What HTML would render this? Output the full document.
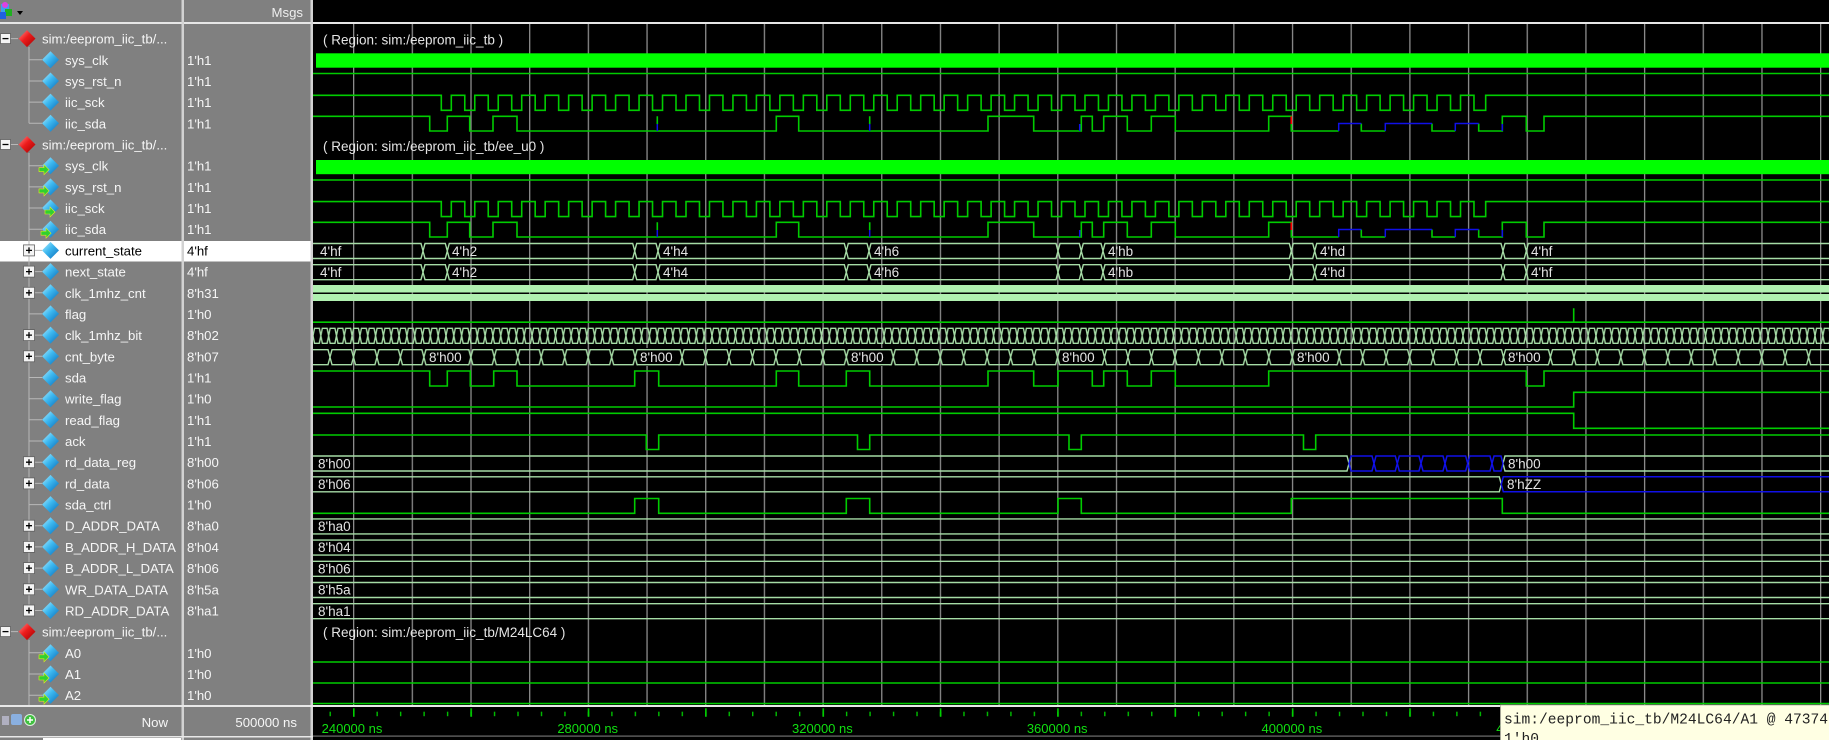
<!DOCTYPE html>
<html><head><meta charset="utf-8"><style>
html,body{margin:0;padding:0;background:#808080;overflow:hidden}
svg{display:block}
.n{font-family:"Liberation Sans",sans-serif;font-size:13.2px;fill:#f6f6f6}
.w{font-family:"Liberation Sans",sans-serif;font-size:13.5px;fill:#e4e4e4}
.t{font-family:"Liberation Sans",sans-serif;font-size:13px;fill:#10e010}
.g{fill:none;stroke:#00cc00;stroke-width:1.6}
.p{fill:none;stroke:#a6dca6;stroke-width:1.4}
.b{fill:none;stroke:#1010e8;stroke-width:1.5}
</style></head><body>
<svg width="1829" height="740" viewBox="0 0 1829 740" xmlns="http://www.w3.org/2000/svg">
<defs>
<linearGradient id="gb" x1="0" y1="0" x2="1" y2="1"><stop offset="0" stop-color="#b8f0ff"/><stop offset="0.45" stop-color="#3cb8f0"/><stop offset="1" stop-color="#0a6cb8"/></linearGradient>
<linearGradient id="gr" x1="0" y1="0" x2="1" y2="1"><stop offset="0" stop-color="#ff9090"/><stop offset="0.45" stop-color="#ee1c1c"/><stop offset="1" stop-color="#a00000"/></linearGradient>
<g id="dia"><polygon points="0,-8.5 8.5,0 0,8.5 -8.5,0" fill="url(#gb)"/></g>
<g id="rdia"><polygon points="0,-8.5 8.5,0 0,8.5 -8.5,0" fill="url(#gr)"/></g>
<g id="arr"><polygon points="-7,2 -2,2 -2,-1 3,4 -2,9 -2,6 -7,6" fill="#30d030" stroke="#e8e820" stroke-width="0.6"/></g>
<g id="plus"><rect x="-5.5" y="-5.5" width="11" height="11" fill="#f4f4f4" stroke="#606060" stroke-width="0.8"/><path d="M-3,0H3M0,-3V3" stroke="#000" stroke-width="1.3"/></g>
<g id="minus"><rect x="-5" y="-5" width="10" height="10" fill="#f4f4f4" stroke="#606060" stroke-width="0.8"/><path d="M-3,0H3" stroke="#000" stroke-width="1.3"/></g>
<pattern id="grid" x="353" y="0" width="58.68" height="740" patternUnits="userSpaceOnUse"><rect x="0" y="0" width="1.3" height="740" fill="#8c8c8c"/></pattern>
<pattern id="cb" x="330" y="0" width="23.47" height="740" patternUnits="userSpaceOnUse"><path d="M2,349.7H21.47L23.47,357.2L21.47,364.7H2L0,357.2Z" class="p"/></pattern>
<pattern id="bit" x="313" y="0" width="7.823" height="740" patternUnits="userSpaceOnUse"><path d="M1.5,328.3H6.32L7.82,335.8L6.32,343.3H1.5L0,335.8Z" class="p"/></pattern>
<pattern id="tmin" x="329.53" y="0" width="23.472" height="740" patternUnits="userSpaceOnUse"><rect x="0" y="711.7" width="1.4" height="4.5" fill="#00c000"/></pattern>
<pattern id="tmaj" x="353" y="0" width="117.36" height="740" patternUnits="userSpaceOnUse"><rect x="0" y="708.3" width="1.6" height="8.5" fill="#00d000"/></pattern>
<clipPath id="wc"><rect x="313" y="24" width="1516" height="682"/></clipPath>
<clipPath id="nc"><rect x="0" y="24" width="181.5" height="682"/></clipPath>
</defs>

<rect x="0" y="0" width="1829" height="740" fill="#808080"/>
<rect x="313" y="0" width="1516" height="740" fill="#000"/>
<rect x="0" y="22" width="1829" height="2" fill="#e6e6e6"/>
<rect x="181.5" y="0" width="2.5" height="740" fill="#d2d2d2"/>
<rect x="310.5" y="0" width="2.5" height="740" fill="#d2d2d2"/>
<rect x="1" y="4" width="8" height="8" fill="#3aa0f0"/><rect x="5" y="9" width="7" height="7" fill="#20b020"/><circle cx="5" cy="5" r="3" fill="#e040e0"/><rect x="0" y="12" width="6" height="7" fill="#2060e0"/>
<path d="M17,11H23L20,15Z" fill="#000"/>
<text x="303" y="17" class="n" text-anchor="end" style="fill:#eee">Msgs</text>

<rect x="0" y="241" width="181.5" height="20.5" fill="#fff"/>
<rect x="184" y="241" width="126.5" height="20.5" fill="#fff"/>

<g stroke="#b8b8b8" stroke-width="1" fill="none">
<path d="M29,47V123.3M29,59.8H42M29,81H42M29,102.1H42M29,123.3H42"/>
<path d="M29,153V610.5M29,165.7H42M29,186.9H42M29,208H42M29,229.2H42M34,250.4H42M34,271.6H42M34,292.8H42M29,313.9H42M34,335.1H42M34,356.3H42M29,377.5H42M29,398.7H42M29,419.8H42M29,441H42M34,462.2H42M34,483.4H42M29,504.6H42M34,525.7H42M34,546.9H42M34,568.1H42M34,589.3H42M34,610.5H42"/>
<path d="M29,640V706M29,652.8H42M29,674H42M29,695.2H42"/>
<path d="M10,38.6H18M10,144.5H18M10,631.6H18"/>
</g>
<use href="#minus" x="5.5" y="38.6"/><use href="#rdia" x="27" y="38.6"/>
<use href="#minus" x="5.5" y="144.5"/><use href="#rdia" x="27" y="144.5"/>
<use href="#minus" x="5.5" y="631.6"/><use href="#rdia" x="27" y="631.6"/>
<g class="n" clip-path="url(#nc)">
<text x="42" y="43.6">sim:/eeprom_iic_tb/...</text>
<text x="42" y="149.5">sim:/eeprom_iic_tb/...</text>
<text x="42" y="636.6">sim:/eeprom_iic_tb/...</text>
</g>
<g>
<use href="#dia" x="50.5" y="59.8"/><use href="#dia" x="50.5" y="81"/><use href="#dia" x="50.5" y="102.1"/><use href="#dia" x="50.5" y="123.3"/>
<use href="#dia" x="50.5" y="165.7"/><use href="#dia" x="50.5" y="186.9"/><use href="#dia" x="50.5" y="208"/><use href="#dia" x="50.5" y="229.2"/>
<use href="#dia" x="50.5" y="250.4"/><use href="#dia" x="50.5" y="271.6"/><use href="#dia" x="50.5" y="292.8"/><use href="#dia" x="50.5" y="313.9"/>
<use href="#dia" x="50.5" y="335.1"/><use href="#dia" x="50.5" y="356.3"/><use href="#dia" x="50.5" y="377.5"/><use href="#dia" x="50.5" y="398.7"/>
<use href="#dia" x="50.5" y="419.8"/><use href="#dia" x="50.5" y="441"/><use href="#dia" x="50.5" y="462.2"/><use href="#dia" x="50.5" y="483.4"/>
<use href="#dia" x="50.5" y="504.6"/><use href="#dia" x="50.5" y="525.7"/><use href="#dia" x="50.5" y="546.9"/><use href="#dia" x="50.5" y="568.1"/>
<use href="#dia" x="50.5" y="589.3"/><use href="#dia" x="50.5" y="610.5"/>
<use href="#dia" x="50.5" y="652.8"/><use href="#dia" x="50.5" y="674"/><use href="#dia" x="50.5" y="695.2"/>
<use href="#arr" x="46" y="165.7"/><use href="#arr" x="46" y="186.9"/><use href="#arr" x="52" y="208"/><use href="#arr" x="48" y="229.2"/>
<use href="#arr" x="46" y="652.8"/><use href="#arr" x="46" y="674"/><use href="#arr" x="46" y="695.2"/>
</g>
<g>
<use href="#plus" x="29" y="250.4"/><use href="#plus" x="29" y="271.6"/><use href="#plus" x="29" y="292.8"/>
<use href="#plus" x="29" y="335.1"/><use href="#plus" x="29" y="356.3"/>
<use href="#plus" x="29" y="462.2"/><use href="#plus" x="29" y="483.4"/>
<use href="#plus" x="29" y="525.7"/><use href="#plus" x="29" y="546.9"/><use href="#plus" x="29" y="568.1"/><use href="#plus" x="29" y="589.3"/><use href="#plus" x="29" y="610.5"/>
</g>
<g class="n" clip-path="url(#nc)">
<text x="65" y="64.8">sys_clk</text><text x="65" y="86">sys_rst_n</text><text x="65" y="107.1">iic_sck</text><text x="65" y="128.3">iic_sda</text>
<text x="65" y="170.7">sys_clk</text><text x="65" y="191.9">sys_rst_n</text><text x="65" y="213">iic_sck</text><text x="65" y="234.2">iic_sda</text>
<text x="65" y="255.4" style="fill:#000">current_state</text><text x="65" y="276.6">next_state</text><text x="65" y="297.8">clk_1mhz_cnt</text><text x="65" y="318.9">flag</text>
<text x="65" y="340.1">clk_1mhz_bit</text><text x="65" y="361.3">cnt_byte</text><text x="65" y="382.5">sda</text><text x="65" y="403.7">write_flag</text>
<text x="65" y="424.8">read_flag</text><text x="65" y="446">ack</text><text x="65" y="467.2">rd_data_reg</text><text x="65" y="488.4">rd_data</text>
<text x="65" y="509.6">sda_ctrl</text><text x="65" y="530.7">D_ADDR_DATA</text><text x="65" y="551.9">B_ADDR_H_DATA</text><text x="65" y="573.1">B_ADDR_L_DATA</text>
<text x="65" y="594.3">WR_DATA_DATA</text><text x="65" y="615.5">RD_ADDR_DATA</text>
<text x="65" y="657.8">A0</text><text x="65" y="679">A1</text><text x="65" y="700.2">A2</text>
</g>
<g class="n">
<text x="187" y="64.8">1'h1</text><text x="187" y="86">1'h1</text><text x="187" y="107.1">1'h1</text><text x="187" y="128.3">1'h1</text>
<text x="187" y="170.7">1'h1</text><text x="187" y="191.9">1'h1</text><text x="187" y="213">1'h1</text><text x="187" y="234.2">1'h1</text>
<text x="187" y="255.4" style="fill:#000">4'hf</text><text x="187" y="276.6">4'hf</text><text x="187" y="297.8">8'h31</text><text x="187" y="318.9">1'h0</text>
<text x="187" y="340.1">8'h02</text><text x="187" y="361.3">8'h07</text><text x="187" y="382.5">1'h1</text><text x="187" y="403.7">1'h0</text>
<text x="187" y="424.8">1'h1</text><text x="187" y="446">1'h1</text><text x="187" y="467.2">8'h00</text><text x="187" y="488.4">8'h06</text>
<text x="187" y="509.6">1'h0</text><text x="187" y="530.7">8'ha0</text><text x="187" y="551.9">8'h04</text><text x="187" y="573.1">8'h06</text>
<text x="187" y="594.3">8'h5a</text><text x="187" y="615.5">8'ha1</text>
<text x="187" y="657.8">1'h0</text><text x="187" y="679">1'h0</text><text x="187" y="700.2">1'h0</text>
</g>

<g clip-path="url(#wc)">
<rect x="313" y="24" width="1516" height="682" fill="url(#grid)"/>
<g class="w">
<text x="323" y="44.5">( Region: sim:/eeprom_iic_tb )</text>
<text x="323" y="151">( Region: sim:/eeprom_iic_tb/ee_u0 )</text>
<text x="323" y="637">( Region: sim:/eeprom_iic_tb/M24LC64 )</text>
</g>
<rect x="316" y="53.3" width="1513" height="14.4" fill="#00ff00"/>
<rect x="316" y="160" width="1513" height="14.2" fill="#00ff00"/>
<path class="g" d="M313,73.5H1829M313,180H1829"/>
<g id="sck"><path class="g" d="M313,95.3H441.3v15h10v-15h13.47v15h10v-15h13.47v15h10v-15h13.47v15h10v-15h13.47v15h10v-15h13.47v15h10v-15h13.47v15h10v-15h13.47v15h10v-15h13.47v15h10v-15h13.47v15h10v-15h13.47v15h10v-15h13.47v15h10v-15h13.47v15h10v-15h13.47v15h10v-15h13.47v15h10v-15h13.47v15h10v-15h13.47v15h10v-15h13.47v15h10v-15h13.47v15h10v-15h13.47v15h10v-15h13.47v15h10v-15h13.47v15h10v-15h13.47v15h10v-15h13.47v15h10v-15h13.47v15h10v-15h13.47v15h10v-15h13.47v15h10v-15h13.47v15h10v-15h13.47v15h10v-15h13.47v15h10v-15h13.47v15h10v-15h13.47v15h10v-15h13.47v15h10v-15h13.47v15h10v-15h13.47v15h10v-15h13.47v15h10v-15h13.47v15h10v-15h13.47v15h10v-15h13.47v15h10v-15h13.47v15h10v-15h13.47v15h10v-15h13.47v15h10v-15h13.47v15h10v-15h13.47v15h10v-15h13.47v15h11.7v-15H1829"/></g>
<use href="#sck" y="106.3"/>
<g id="isda">
<path class="g" d="M313,116.3H429.7V131H447.3V116.3H469.7V131H493V116.3H517V131H776.3V116.3H798.7V131H988V116.3H1033.7V131H1081.3V116.3H1092.3V131H1103.7V116.3H1127.3V131H1151.3V116.3H1175.3V131H1268.7V116.3H1291.3V131H1338.7M1361.3,123.5V131H1385.3M1432,123.5V131H1455.3M1478.7,123.5V131H1502.3V116.3H1526.3V131H1544V116.3H1829M657.3,116.3V124M869.7,116.3V124"/>
<path class="b" d="M657.3,124V131M869.7,124V131M1079.7,124V131M1338.7,131V123.5H1361.3M1385.3,131V123.5H1432M1455.3,131V123.5H1478.7M1502.3,131V124"/>
<path d="M1291.3,116.3V124" stroke="#ff0000" stroke-width="1.6"/>
</g>
<use href="#isda" y="106"/>
<g id="cs"><path class="p" d="M300,243.5H421L423,251L421,258.5H300ZM425,243.5H445.3L447.3,251L445.3,258.5H425L423,251ZM449.3,243.5H632.7L634.7,251L632.7,258.5H449.3L447.3,251ZM636.7,243.5H656L658,251L656,258.5H636.7L634.7,251ZM660,243.5H844.3L846.3,251L844.3,258.5H660L658,251ZM848.3,243.5H867L869,251L867,258.5H848.3L846.3,251ZM871,243.5H1056L1058,251L1056,258.5H871L869,251ZM1060,243.5H1079.3L1081.3,251L1079.3,258.5H1060L1058,251ZM1083.3,243.5H1101L1103,251L1101,258.5H1083.3L1081.3,251ZM1105,243.5H1289.3L1291.3,251L1289.3,258.5H1105L1103,251ZM1293.3,243.5H1312.7L1314.7,251L1312.7,258.5H1293.3L1291.3,251ZM1316.7,243.5H1501L1503,251L1501,258.5H1316.7L1314.7,251ZM1505,243.5H1524.3L1526.3,251L1524.3,258.5H1505L1503,251ZM1528.3,243.5H1840V258.5H1528.3L1526.3,251Z"/>
<g class="w"><text x="320" y="256">4'hf</text><text x="452" y="256">4'h2</text><text x="663" y="256">4'h4</text><text x="874" y="256">4'h6</text><text x="1108" y="256">4'hb</text><text x="1320" y="256">4'hd</text><text x="1531" y="256">4'hf</text></g></g>
<use href="#cs" y="21.18"/>
<rect x="313" y="285" width="1516" height="7.5" fill="#b0f0b0"/>
<rect x="313" y="294" width="1516" height="7" fill="#b0f0b0"/>
<path class="g" d="M313,322.2H1829M1573.7,322.2V308.3"/>
<rect x="313" y="326" width="1516" height="20" fill="url(#bit)"/>
<rect x="313" y="347" width="1516" height="20" fill="url(#cb)"/>
<g fill="#000">
<rect x="427" y="348" width="40" height="18"/><rect x="638" y="348" width="40" height="18"/><rect x="849.3" y="348" width="40" height="18"/><rect x="1060.6" y="348" width="40" height="18"/><rect x="1295.3" y="348" width="40" height="18"/><rect x="1506.5" y="348" width="40" height="18"/>
</g>
<path class="p" d="M425.9,349.7H468.8M425.9,364.7H468.8M637.1,349.7H680M637.1,364.7H680M848.3,349.7H891.3M848.3,364.7H891.3M1059.6,349.7H1102.5M1059.6,364.7H1102.5M1294.3,349.7H1337.2M1294.3,364.7H1337.2M1505.5,349.7H1548.4M1505.5,364.7H1548.4"/>
<g class="w"><text x="429" y="362">8'h00</text><text x="640" y="362">8'h00</text><text x="851" y="362">8'h00</text><text x="1062" y="362">8'h00</text><text x="1297" y="362">8'h00</text><text x="1508" y="362">8'h00</text></g>
<path class="g" d="M313,371H429.7V386H447.3V371H470.3V386H493.7V371H517V386H634.7V371H658.7V386H776.3V371H798.7V386H846.3V371H869.7V386H988V371H1033.7V386H1058V371H1092.3V386H1103.7V371H1127.3V386H1151.3V371H1175.3V386H1268.7V371H1526.3V386H1544V371H1829"/>
<path class="g" d="M313,407H1573.7V392.3H1829M313,413.3H1573.7V428.3H1829"/>
<path class="g" d="M313,435H646.3V449.5H658.7V435H857.5V449.5H869.7V435H1069V449.5H1081.3V435H1303.5V449.5H1315.7V435H1829"/>
<path class="p" d="M300,456H1347L1349,463.5L1347,471H300ZM1505,456H1840V471H1505L1503,463.5Z"/>
<path class="b" d="M1351,456H1372L1374,463.5L1372,471H1351L1349,463.5ZM1376,456H1395.3L1397.3,463.5L1395.3,471H1376L1374,463.5ZM1399.3,456H1419L1421,463.5L1419,471H1399.3L1397.3,463.5ZM1423,456H1443L1445,463.5L1443,471H1423L1421,463.5ZM1447,456H1465.7L1467.7,463.5L1465.7,471H1447L1445,463.5ZM1469.7,456H1490L1492,463.5L1490,471H1469.7L1467.7,463.5ZM1494,456H1501L1503,463.5L1501,471H1494L1492,463.5Z"/>
<g class="w"><text x="318" y="468.5">8'h00</text><text x="1508" y="468.5">8'h00</text></g>
<path class="p" d="M300,476.8H1499.3L1501.3,484.3L1499.3,491.8H300Z"/>
<path class="b" d="M1503.3,476.8H1840V491.8H1503.3L1501.3,484.3Z"/>
<g class="w"><text x="318" y="489">8'h06</text><text x="1507" y="489">8'hZZ</text></g>
<path class="g" d="M313,513.3H634.7V498.5H658.7V513.3H846.3V498.5H869.7V513.3H1058V498.5H1081.3V513.3H1291.3V498.5H1502.3V513.3H1829"/>
<path class="p" d="M313,518.9H1829M313,533.9H1829M313,540.1H1829M313,555.1H1829M313,561.3H1829M313,576.3H1829M313,582.5H1829M313,597.5H1829M313,603.7H1829M313,618.7H1829"/>
<g class="w"><text x="318" y="531">8'ha0</text><text x="318" y="552.2">8'h04</text><text x="318" y="573.4">8'h06</text><text x="318" y="594.6">8'h5a</text><text x="318" y="615.8">8'ha1</text></g>
<path class="g" d="M313,662H1829M313,683H1829M313,703.5H1829"/>
</g>

<rect x="0" y="705" width="1829" height="2" fill="#e8e8e8"/>
<rect x="313" y="707" width="1516" height="33" fill="#000"/>
<rect x="313" y="707" width="1516" height="12" fill="url(#tmin)"/>
<rect x="313" y="707" width="1516" height="12" fill="url(#tmaj)"/>
<g class="t" text-anchor="middle">
<text x="352" y="733">240000 ns</text><text x="587.7" y="733">280000 ns</text><text x="822.4" y="733">320000 ns</text><text x="1057.2" y="733">360000 ns</text><text x="1291.9" y="733">400000 ns</text><text x="1526.6" y="733">440000 ns</text>
</g>
<rect x="313" y="735.5" width="1516" height="1.2" fill="#707070"/>
<rect x="0" y="736" width="313" height="1.5" fill="#e8e8e8"/>
<rect x="43" y="738" width="138" height="2" fill="#fff"/>
<rect x="2" y="716" width="7" height="9" fill="#b0b0c0"/><rect x="11" y="714" width="11" height="11" rx="2" fill="#8ab0e0"/><circle cx="30" cy="720" r="5.5" fill="#40c040" stroke="#e0f0e0" stroke-width="1"/><path d="M27,720H33M30,717V723" stroke="#fff" stroke-width="1.5"/>
<text x="168" y="727" class="n" text-anchor="end">Now</text>
<text x="297" y="727" class="n" text-anchor="end">500000 ns</text>
<rect x="1500.5" y="705" width="329" height="36" fill="#ffffe3" stroke="#b0b0a0" stroke-width="0.8"/>
<text x="1504" y="723.5" style="font-family:'Liberation Mono',monospace;font-size:14.6px;fill:#222">sim:/eeprom_iic_tb/M24LC64/A1 @ 47374</text>
<text x="1504" y="743" style="font-family:'Liberation Mono',monospace;font-size:14.6px;fill:#222">1'h0</text>
</svg>
</body></html>
